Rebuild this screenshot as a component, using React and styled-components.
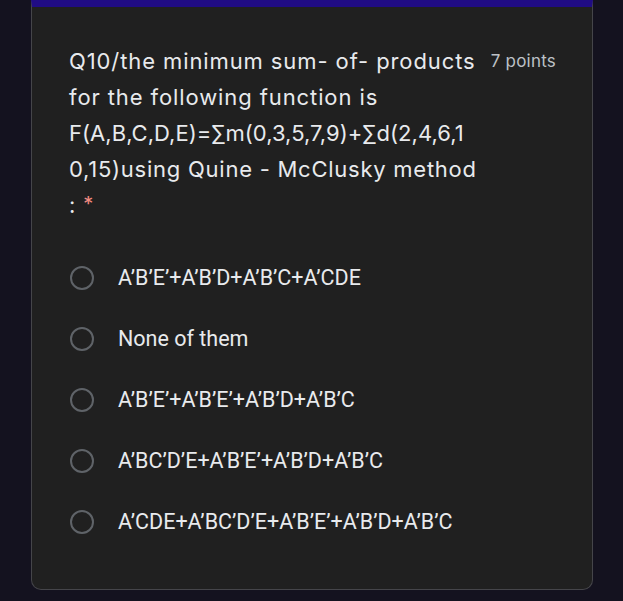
import React from "react";
import styled, { createGlobalStyle } from "styled-components";

const GlobalStyle = createGlobalStyle`
  html, body {
    margin: 0;
    padding: 0;
    background-color: #14121f;
  }
`;

const Page = styled.div`
  width: 623px;
  height: 601px;
  background-color: #14121f;
  padding: 0 30px 0 31px;
  box-sizing: border-box;
  overflow: hidden;
`;

const Card = styled.div`
  height: 590px;
  box-sizing: border-box;
  background-color: #202020;
  border: 1px solid #45454a;
  border-top: 7px solid #200c84;
  border-radius: 0 0 10px 10px;
  padding: 36px 20px 0 37px;
  display: flex;
  flex-direction: column;
`;

const Header = styled.div`
  display: flex;
  align-items: flex-start;
`;

const Title = styled.div`
  font-family: "Inter", "Open Sans", sans-serif;
  font-size: 22px;
  line-height: 36px;
  color: #e8eaed;
  white-space: pre;
  letter-spacing: 0.9px;
`;

const Line = styled.span`
  letter-spacing: ${(p) => p.$spacing};
`;

const Required = styled.span`
  color: #f28b82;
  margin-left: 7px;
  font-size: 20px;
  line-height: 20px;
  vertical-align: 2px;
`;

const Points = styled.div`
  font-family: "Inter", sans-serif;
  font-size: 17px;
  line-height: 36px;
  color: #bdc1c6;
  margin-left: 14px;
  white-space: nowrap;
  letter-spacing: 0.2px;
`;

const Options = styled.div`
  display: flex;
  flex-direction: column;
  margin-top: 24px;
`;

const Option = styled.label`
  display: flex;
  align-items: center;
  height: 61px;
  margin-left: 1px;
`;

const Radio = styled.span`
  width: 20px;
  height: 20px;
  border-radius: 50%;
  border: 2px solid #5f6368;
  flex-shrink: 0;
`;

const OptionText = styled.span`
  font-family: "Roboto", sans-serif;
  font-size: 21.5px;
  color: #e8eaed;
  margin-left: 24px;
`;

const options = [
  "A’B’E’+A’B’D+A’B’C+A’CDE",
  "None of them",
  "A’B’E’+A’B’E’+A’B’D+A’B’C",
  "A’BC’D’E+A’B’E’+A’B’D+A’B’C",
  "A’CDE+A’BC’D’E+A’B’E’+A’B’D+A’B’C",
];

const App = () => {
  return (
    <Page>
      <GlobalStyle />
      <Card>
        <Header>
          <Title>
            {"Q10/the minimum sum- of- products\nfor the following function is\n"}
            <Line $spacing="0.05px">{"F(A,B,C,D,E)=∑m(0,3,5,7,9)+∑d(2,4,6,1"}</Line>
            {"\n"}
            <Line $spacing="0.75px">{"0,15)using Quine - McClusky method"}</Line>
            {"\n:"}
            <Required>*</Required>
          </Title>
          <Points>7 points</Points>
        </Header>
        <Options>
          {options.map((text, i) => (
            <Option key={i}>
              <Radio />
              <OptionText>{text}</OptionText>
            </Option>
          ))}
        </Options>
      </Card>
    </Page>
  );
};

export default App;
